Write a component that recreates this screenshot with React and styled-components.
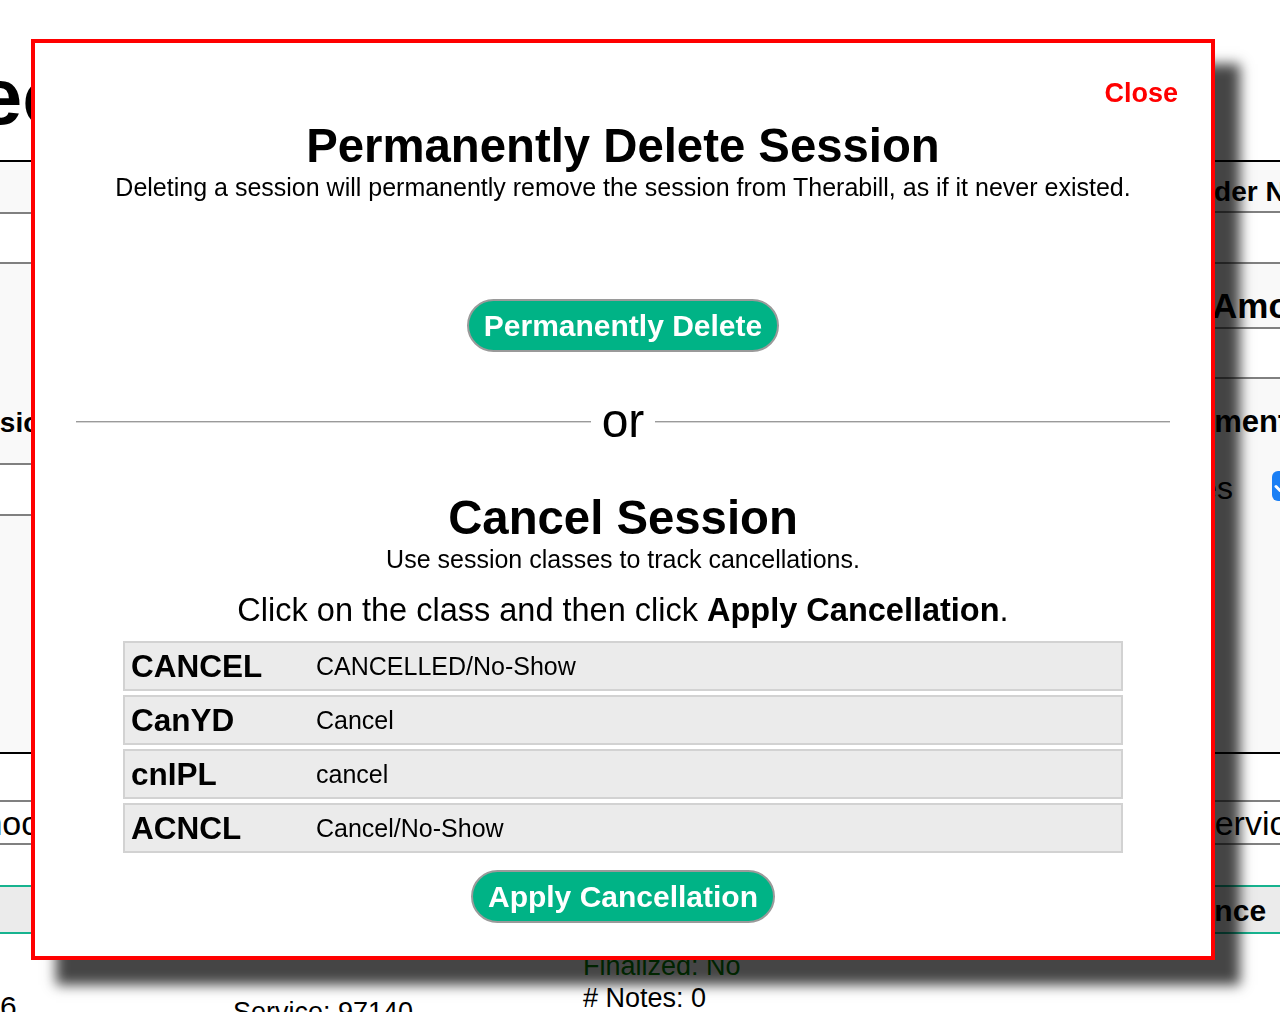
import React from "react";
import styled, { createGlobalStyle } from "styled-components";

const Global = createGlobalStyle`
  html, body { margin: 0; padding: 0; background: #fff; }
  body {
    font-family: "Liberation Sans", Arial, sans-serif;
    color: #000;
    overflow: hidden;
  }
`;

/* ---------- background page ---------- */

const Page = styled.div`
  position: relative;
  width: 1280px;
  height: 1012px;
  overflow: hidden;
  background: #fff;
`;

const PageTitle = styled.h1`
  box-sizing: border-box;
  margin: 0 0 0 -80px;
  height: 160px;
  padding-top: 51px;
  font-size: 80px;
  line-height: 92px;
  font-weight: bold;
  white-space: nowrap;
`;

const Split = styled.div`
  display: grid;
  grid-template-columns: 640px 640px;
`;

const Col = styled.div`
  display: flex;
  flex-direction: column;
`;

const Band = styled.div`
  box-sizing: border-box;
  height: ${(p) => p.$h}px;
  background: ${(p) => p.$bg || "#fff"};
  border-top: 2px solid ${(p) => p.$line || "#808080"};
  border-bottom: ${(p) => (p.$lineBottom ? `2px solid ${p.$lineBottom}` : "none")};
  padding-top: ${(p) => p.$pad || 0}px;
  white-space: nowrap;
`;

const BandGrid = styled(Band)`
  display: grid;
  grid-template-columns: 640px 640px;
`;

const Label = styled.div`
  font-size: ${(p) => p.$size}px;
  font-weight: ${(p) => (p.$bold ? "bold" : "normal")};
  line-height: ${(p) => Math.round(p.$size * 1.15)}px;
  margin-left: ${(p) => p.$at}px;
  padding-top: ${(p) => p.$pad || 0}px;
  color: ${(p) => p.$color || "#000"};
  white-space: nowrap;
  display: flex;
  align-items: center;
`;

const CheckBox = styled.span`
  display: inline-flex;
  align-items: center;
  justify-content: center;
  width: 30px;
  height: 30px;
  border-radius: 6px;
  background: #1a7ff5;
  margin-left: ${(p) => p.$gap}px;
  margin-top: -6px;
`;

const InfoRow = styled.div`
  display: grid;
  grid-template-columns: 233px 350px 1fr;
  align-items: start;
`;

const InfoCell = styled.div`
  font-size: ${(p) => p.$size || 27}px;
  line-height: 32px;
  padding-top: ${(p) => p.$pad}px;
  margin-left: ${(p) => p.$at || 0}px;
  white-space: nowrap;
`;

const Finalized = styled.div`
  color: #008000;
`;

/* ---------- modal ---------- */

const Modal = styled.div`
  position: fixed;
  top: 39px;
  left: 31px;
  width: 1184px;
  box-sizing: border-box;
  background: #fff;
  border: 4px solid #ff0000;
  box-shadow: 25px 25px 12px rgba(0, 0, 0, 0.73);
  padding: 35px 0 33px;
  text-align: center;
  font-family: "Liberation Sans", Arial, sans-serif;
  color: #000;
`;

const CloseLink = styled.div`
  text-align: right;
  padding-right: 33px;
  color: #ff0000;
  font-size: 27px;
  line-height: 31px;
  font-weight: bold;
  cursor: pointer;
`;

const Title = styled.h2`
  margin: ${(p) => p.$top}px 0 0;
  font-size: 47.3px;
  line-height: 47px;
  font-weight: bold;
`;

const Sub = styled.p`
  margin: 4px 0 0;
  font-size: 25px;
  line-height: 29px;
`;

const ButtonRow = styled.div`
  margin-top: ${(p) => p.$top}px;
  display: flex;
  justify-content: center;
`;

const PillButton = styled.button`
  box-sizing: border-box;
  background: #00b386;
  color: #fff;
  border: 2px solid #9a9a9a;
  border-radius: 999px;
  font-family: "Liberation Sans", Arial, sans-serif;
  font-weight: bold;
  font-size: 30px;
  line-height: 33px;
  padding: 8px 15px;
  cursor: pointer;
`;

const Divider = styled.div`
  margin: 41px 41px 0;
  display: flex;
  align-items: center;
  gap: 11px;
`;

const Rule = styled.div`
  flex: 1;
  margin-top: 2px;
  border-top: 1px solid #9a9a9a;
  border-bottom: 1px solid #d6d6d6;
`;

const Or = styled.span`
  font-size: 48px;
  line-height: 55px;
`;

const Instruction = styled.p`
  margin: 17px 0 0;
  font-size: 32.5px;
  line-height: 38px;
  b { font-weight: bold; }
`;

const ClassList = styled.div`
  width: 1000px;
  margin: 12px auto 0;
  display: flex;
  flex-direction: column;
  gap: 4px;
  text-align: left;
`;

const ClassRow = styled.div`
  box-sizing: border-box;
  height: 50px;
  display: flex;
  align-items: center;
  background: #ebebeb;
  border: 2px solid #d2d2d2;
  cursor: pointer;
`;

const Code = styled.span`
  box-sizing: border-box;
  width: 191px;
  padding-left: 6px;
  font-size: 31.5px;
  font-weight: bold;
`;

const Desc = styled.span`
  font-size: 25px;
`;

const classes = [
  ["CANCEL", "CANCELLED/No-Show"],
  ["CanYD", "Cancel"],
  ["cnIPL", "cancel"],
  ["ACNCL", "Cancel/No-Show"],
];

const Check = () => (
  <svg width="20" height="20" viewBox="0 0 20 20">
    <path d="M4 10.5l4 4 8-9" fill="none" stroke="#fff" strokeWidth="3" strokeLinecap="round" strokeLinejoin="round" />
  </svg>
);

export default function App() {
  return (
    <>
      <Global />
      <Page>
        <PageTitle>Record</PageTitle>
        <Split>
          <Col>
            <Band $h={52} $bg="#f9f9f9" $line="#000" />
            <Band $h={50} />
            <Band $h={201} $bg="#f9f9f9" $pad={143}>
              <Label $size={28} $bold $at={-50}>Session</Label>
            </Band>
            <Band $h={51} />
            <Band $h={238} $bg="#f9f9f9" />
          </Col>
          <Col>
            <Band $h={51} $bg="#f9f9f9" $line="#000" $pad={14}>
              <Label $size={28} $bold $at={504}>Provider Name</Label>
            </Band>
            <Band $h={51} />
            <Band $h={65} $bg="#f9f9f9" $pad={22}>
              <Label $size={35} $bold $at={572}>Amount</Label>
            </Band>
            <Band $h={50} />
            <Band $h={375} $bg="#f9f9f9" $pad={25}>
              <Label $size={31} $bold $at={519}>Payment</Label>
              <Label $size={32} $at={472} $pad={30}>
                Charges
                <CheckBox $gap={39}>
                  <Check />
                </CheckBox>
              </Label>
            </Band>
          </Col>
        </Split>
        <Band $h={48} $line="#000" />
        <BandGrid $h={43} $pad={2}>
          <Label $size={34} $at={-60}>Unnoc</Label>
          <Label $size={34} $at={552}>Service</Label>
        </BandGrid>
        <Band $h={42} />
        <BandGrid $h={49} $bg="#ebebeb" $line="#17b38f" $lineBottom="#17b38f" $pad={2}>
          <span />
          <Label $size={30} $bold $at={511}>Balance</Label>
        </BandGrid>
        <InfoRow>
          <InfoCell $size={30} $pad={57} $at={-50}>2016</InfoCell>
          <InfoCell $pad={62}>Service: 97140</InfoCell>
          <InfoCell $pad={16}>
            <Finalized>Finalized: No</Finalized>
            <div># Notes: 0</div>
          </InfoCell>
        </InfoRow>
      </Page>

      <Modal role="dialog">
        <CloseLink>Close</CloseLink>
        <Title $top={13}>Permanently Delete Session</Title>
        <Sub>
          Deleting a session will permanently remove the session from Therabill, as if it never existed.
        </Sub>
        <ButtonRow $top={97}>
          <PillButton>Permanently Delete</PillButton>
        </ButtonRow>
        <Divider>
          <Rule />
          <Or>or</Or>
          <Rule />
        </Divider>
        <Title $top={46}>Cancel Session</Title>
        <Sub>Use session classes to track cancellations.</Sub>
        <Instruction>
          Click on the class and then click <b>Apply Cancellation</b>.
        </Instruction>
        <ClassList>
          {classes.map(([code, desc]) => (
            <ClassRow key={code}>
              <Code>{code}</Code>
              <Desc>{desc}</Desc>
            </ClassRow>
          ))}
        </ClassList>
        <ButtonRow $top={17}>
          <PillButton>Apply Cancellation</PillButton>
        </ButtonRow>
      </Modal>
    </>
  );
}
